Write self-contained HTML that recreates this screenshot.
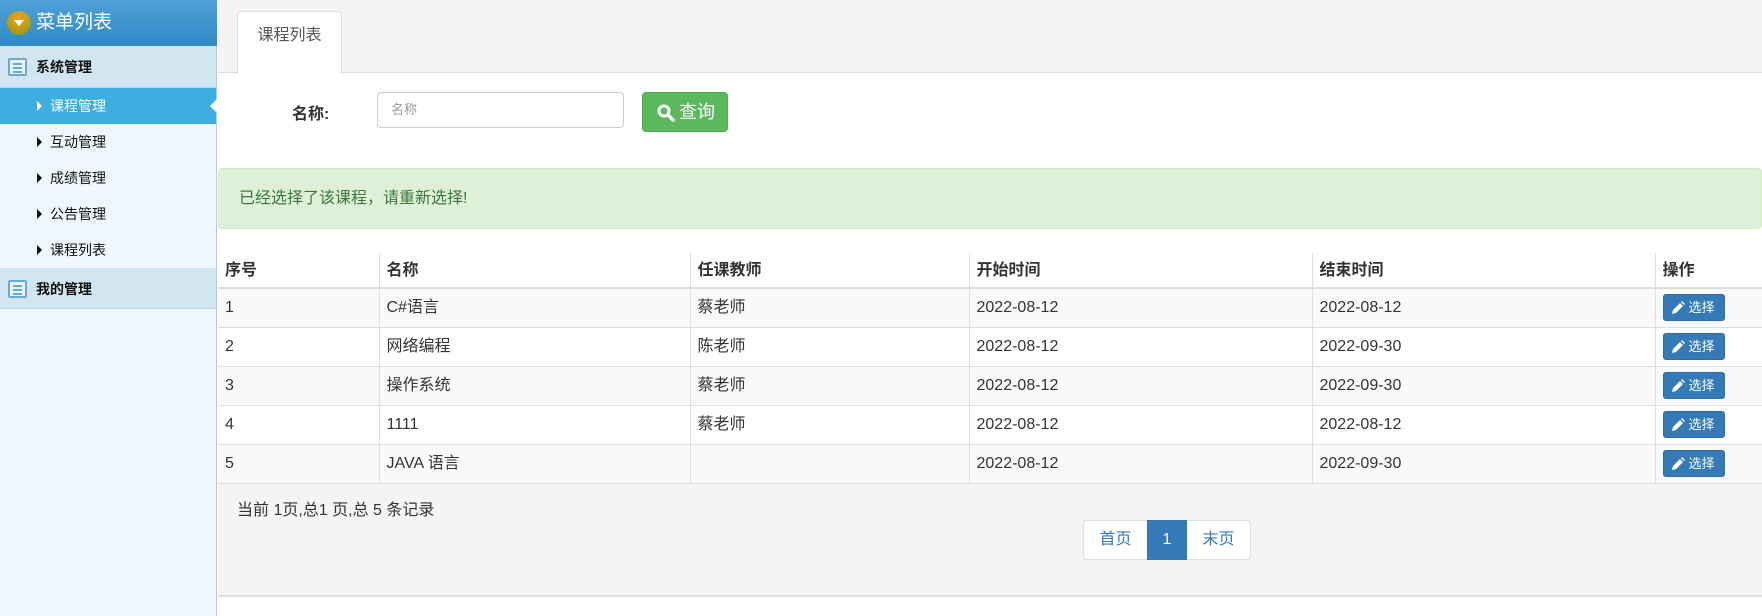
<!DOCTYPE html>
<html><head><meta charset="utf-8"><style>
*{margin:0;padding:0;box-sizing:border-box}
body{width:1762px;height:616px;overflow:hidden;background:#fff;font-family:"Liberation Sans","Noto Sans CJK SC",sans-serif;color:#333;position:relative}
.a{position:absolute}
#side{left:0;top:0;width:217px;height:616px;background:#eef7fd;border-right:1px solid #a9d0e6}
.hd{left:0;top:0;width:217px;height:46px;background:linear-gradient(#4fa0d6,#2f8ac6);color:#fff;font-size:19px;line-height:46px;padding-left:36px}
.grp{left:0;width:216px;height:42px;background:#d2e6f1;border-bottom:1px solid #b8d4e4;font-size:14px;font-weight:bold;color:#111;line-height:42px;padding-left:36px}
.it{left:0;width:216px;height:36px;font-size:14px;line-height:36px;padding-left:50px;color:#111}
.it:before{content:"";position:absolute;left:37px;top:13px;border-left:5px solid #111;border-top:5px solid transparent;border-bottom:5px solid transparent}
.ico{position:absolute;left:8px;top:12px;width:19px;height:18px;border:2px solid #6aaad3;background:#e8f3fa;border-radius:2px}
.ico i{position:absolute;left:3px;right:3px;height:2px;background:#6aaad3}
table{border-collapse:collapse;font-size:16px;position:absolute;left:218px;top:253px;width:1544px}
td,th{text-align:left;padding:0 7px;height:39px;border-top:1px solid #ddd;vertical-align:middle;line-height:20px}
tr:last-child td{border-bottom:1px solid #ddd}
th{height:35px;border-top:none;border-bottom:2px solid #ddd;font-weight:bold;vertical-align:bottom;padding-bottom:6px}
td+td,th+th{border-left:1px solid #ddd}
tr:nth-child(even) td{background:#f9f9f9}
tr:nth-child(odd) td{background:#fff}
.btn{display:inline-block;position:relative;background:#337ab7;border:1px solid #2e6da4;color:#fff;border-radius:3px;font-size:13px;height:27px;line-height:25px;width:62px;padding-left:25px;vertical-align:middle}
.btn svg{position:absolute;left:7px;top:6px}
</style></head><body>
<div id="side" class="a">
<div class="a hd"><span class="a" style="left:7px;top:11px;width:24px;height:24px;border-radius:50%;background:radial-gradient(circle at 50% 30%,#f0a020,#8a9a10)"></span><span class="a" style="left:14px;top:20px;border-top:6px solid #fff;border-left:5px solid transparent;border-right:5px solid transparent"></span>菜单列表</div>
<div class="a grp" style="top:46px"><div class="ico"><i style="top:3px"></i><i style="top:7px"></i><i style="top:11px"></i></div>系统管理</div>
<div class="a it" style="top:88px;background:#3caee0;color:#fff">课程管理<span class="a" style="right:-1px;top:11px;border-right:7px solid #fff;border-top:7px solid transparent;border-bottom:7px solid transparent"></span></div>
<div class="a it" style="top:124px">互动管理</div>
<div class="a it" style="top:160px">成绩管理</div>
<div class="a it" style="top:196px">公告管理</div>
<div class="a it" style="top:232px">课程列表</div>
<div class="a grp" style="top:268px;height:41px"><div class="ico"><i style="top:3px"></i><i style="top:7px"></i><i style="top:11px"></i></div>我的管理</div>
</div>
<style>#side .it:nth-of-type(3):before{border-left-color:#fff}</style>
<div class="a" style="left:218px;top:0;width:1544px;height:73px;background:#f4f4f4;border-bottom:1px solid #ddd"></div>
<div class="a" style="left:237px;top:11px;width:105px;height:63px;background:#fff;border:1px solid #ddd;border-bottom:none;border-radius:4px 4px 0 0;font-size:16px;color:#555;text-align:center;line-height:48px">课程列表</div>
<div class="a" style="left:292px;top:100px;font-size:16px;font-weight:bold">名称:</div>
<div class="a" style="left:377px;top:92px;width:247px;height:36px;border:1px solid #ccc;border-radius:4px;font-size:13px;color:#999;line-height:34px;padding-left:13px">名称</div>
<div class="a" style="left:642px;top:92px;width:86px;height:40px;background:#5cb85c;border:1px solid #4cae4c;border-radius:4px;color:#fff;font-size:18px;line-height:38px;padding-left:36px"><svg class="a" style="left:14px;top:11px" width="18" height="18" viewBox="0 0 18 18"><circle cx="7" cy="7" r="5" fill="none" stroke="#fff" stroke-width="3"/><path d="M11 11l5 5" stroke="#fff" stroke-width="3.5" stroke-linecap="round"/></svg>查询</div>
<div class="a" style="left:218px;top:168px;width:1544px;height:61px;background:#dff0d8;border:1px solid #d6e9c6;border-radius:4px;color:#3c763d;font-size:16px;line-height:59px;padding-left:20px">已经选择了该课程，请重新选择!</div>
<div class="a" style="left:218px;top:483px;width:1544px;height:114px;background:#f4f4f4;border-bottom:2px solid #ddd"></div>
<table>
<tr><th style="width:161px">序号</th><th style="width:311px">名称</th><th style="width:279px">任课教师</th><th style="width:343px">开始时间</th><th style="width:343px">结束时间</th><th>操作</th></tr>
<tr><td>1</td><td>C#语言</td><td>蔡老师</td><td>2022-08-12</td><td>2022-08-12</td><td><span class="btn"><svg width="14" height="14" viewBox="0 0 14 14"><path d="M1 13l1-4 7-7 3 3-7 7z M10 1l1-1 3 3-1 1z" fill="#fff"/></svg>选择</span></td></tr>
<tr><td>2</td><td>网络编程</td><td>陈老师</td><td>2022-08-12</td><td>2022-09-30</td><td><span class="btn"><svg width="14" height="14" viewBox="0 0 14 14"><path d="M1 13l1-4 7-7 3 3-7 7z M10 1l1-1 3 3-1 1z" fill="#fff"/></svg>选择</span></td></tr>
<tr><td>3</td><td>操作系统</td><td>蔡老师</td><td>2022-08-12</td><td>2022-09-30</td><td><span class="btn"><svg width="14" height="14" viewBox="0 0 14 14"><path d="M1 13l1-4 7-7 3 3-7 7z M10 1l1-1 3 3-1 1z" fill="#fff"/></svg>选择</span></td></tr>
<tr><td>4</td><td>1111</td><td>蔡老师</td><td>2022-08-12</td><td>2022-08-12</td><td><span class="btn"><svg width="14" height="14" viewBox="0 0 14 14"><path d="M1 13l1-4 7-7 3 3-7 7z M10 1l1-1 3 3-1 1z" fill="#fff"/></svg>选择</span></td></tr>
<tr><td>5</td><td>JAVA 语言</td><td></td><td>2022-08-12</td><td>2022-09-30</td><td><span class="btn"><svg width="14" height="14" viewBox="0 0 14 14"><path d="M1 13l1-4 7-7 3 3-7 7z M10 1l1-1 3 3-1 1z" fill="#fff"/></svg>选择</span></td></tr>
</table>
<div class="a" style="left:237px;top:496px;font-size:16px">当前 1页,总1 页,总 5 条记录</div>
<div class="a" style="left:1083px;top:520px;width:168px;height:40px;background:#fff;border:1px solid #ddd;border-radius:4px;font-size:16px;color:#337ab7;line-height:38px">
<span class="a" style="left:0;width:63px;text-align:center">首页</span>
<span class="a" style="left:63px;top:-1px;width:40px;height:40px;background:#337ab7;color:#fff;text-align:center;line-height:40px">1</span>
<span class="a" style="left:103px;width:63px;text-align:center">末页</span>
</div>
</body></html>
